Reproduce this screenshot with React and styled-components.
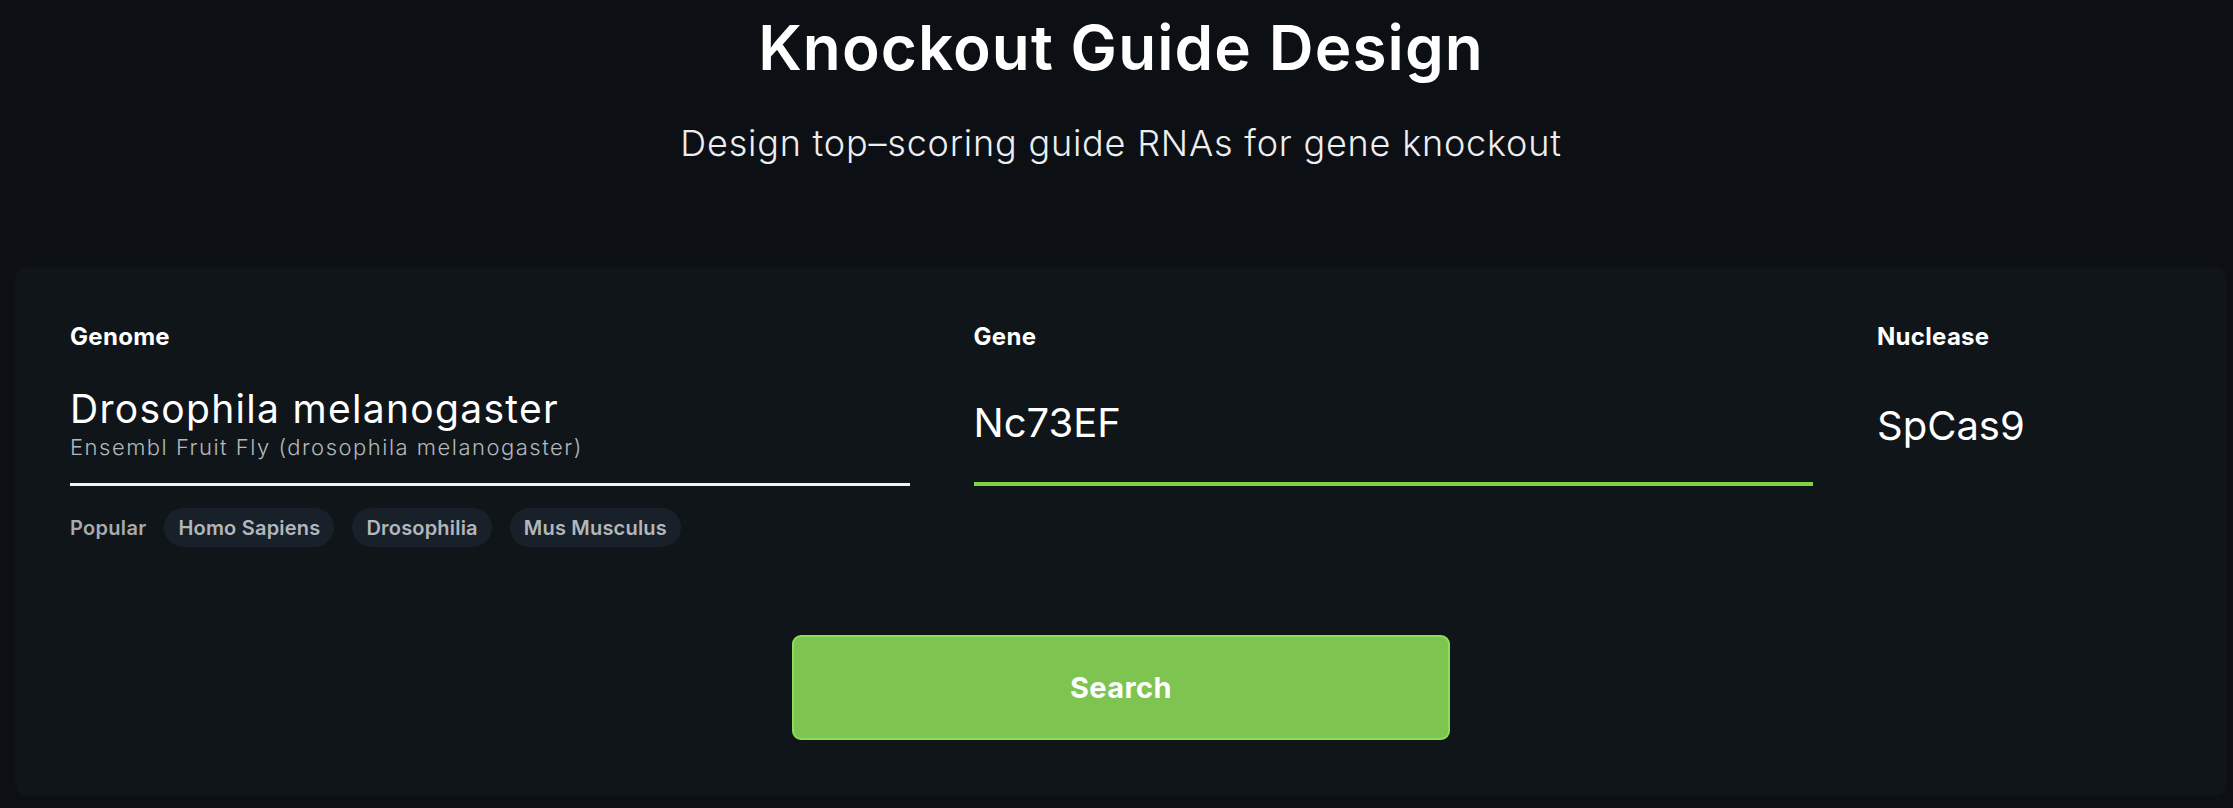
import React from "react";
import styled, { createGlobalStyle } from "styled-components";

const Global = createGlobalStyle`
  html, body { margin: 0; padding: 0; background: #0c1014; }
  body { font-family: Inter, "Noto Sans", sans-serif; color: #fff; -webkit-font-smoothing: antialiased; }
  * { box-sizing: border-box; }
`;

const Page = styled.div`
  width: 2233px;
  height: 808px;
  padding: 0 7px 0 16px;
  background: #0c1014;
  overflow: hidden;
`;

const Header = styled.header`
  display: flex;
  flex-direction: column;
  align-items: center;
  padding-top: 12px;
`;

const Title = styled.h1`
  margin: 0;
  font-size: 62px;
  line-height: 72px;
  font-weight: 600;
  letter-spacing: 1.1px;
  color: #ffffff;
`;

const Subtitle = styled.p`
  margin: 37px 0 0;
  font-size: 36px;
  line-height: 44px;
  font-weight: 300;
  letter-spacing: 0.8px;
  color: #eceef0;
`;

const Panel = styled.section`
  margin-top: 103px;
  background: #0f1519;
  border-radius: 10px;
  padding: 54px 54px 55px;
  box-shadow: 0 0 0 1px rgba(255, 255, 255, 0.015);
`;

const Fields = styled.div`
  display: grid;
  grid-template-columns: 1fr 1fr 295px;
  column-gap: 64px;
`;

const Field = styled.div`
  display: flex;
  flex-direction: column;
`;

const Label = styled.div`
  font-size: 24px;
  line-height: 29px;
  font-weight: 700;
  letter-spacing: 0.3px;
  color: #ffffff;
`;

const InputBox = styled.div`
  margin-top: 12px;
  height: 123px;
  display: flex;
  flex-direction: column;
  justify-content: center;
  padding-top: ${(p) => (p.$offset ? "6px" : "0")};
  border-bottom: ${(p) =>
    p.$line === "green" ? "4px solid #7fd24a" : p.$line === "white" ? "3px solid #f2f2f2" : "3px solid transparent"};
`;

const Value = styled.div`
  font-size: ${(p) => p.$size || 40}px;
  line-height: 1.2;
  font-weight: 400;
  letter-spacing: ${(p) => p.$ls || 0}px;
  color: #ffffff;
`;

const SubValue = styled.div`
  margin-top: 2px;
  font-size: 22px;
  line-height: 25px;
  font-weight: 300;
  letter-spacing: 1.5px;
  color: #b4b8bc;
`;

const Popular = styled.div`
  margin-top: 22px;
  display: flex;
  align-items: center;
  gap: 18px;
`;

const PopularLabel = styled.span`
  font-size: 20px;
  font-weight: 600;
  letter-spacing: 0.3px;
  color: #a7abaf;
`;

const Chip = styled.button`
  height: 39px;
  padding: 0 14px;
  border: none;
  border-radius: 20px;
  background: #18212a;
  color: #b3b7bb;
  font-family: inherit;
  font-size: 20px;
  font-weight: 600;
  letter-spacing: 0.2px;
  cursor: pointer;
`;

const Actions = styled.div`
  display: flex;
  justify-content: center;
  margin-top: 88px;
`;

const SearchButton = styled.button`
  width: 658px;
  height: 105px;
  border: 2px solid #8fdc5c;
  border-radius: 9px;
  background: #7dc450;
  color: #ffffff;
  font-family: inherit;
  font-size: 29px;
  font-weight: 700;
  letter-spacing: 0.4px;
  cursor: pointer;
`;

export default function App() {
  return (
    <>
      <Global />
      <Page>
        <Header>
          <Title>Knockout Guide Design</Title>
          <Subtitle>Design top–scoring guide RNAs for gene knockout</Subtitle>
        </Header>
        <Panel>
          <Fields>
            <Field>
              <Label>Genome</Label>
              <InputBox $line="white">
                <Value $size={39} $ls={1.3}>Drosophila melanogaster</Value>
                <SubValue>Ensembl Fruit Fly (drosophila melanogaster)</SubValue>
              </InputBox>
              <Popular>
                <PopularLabel>Popular</PopularLabel>
                <Chip>Homo Sapiens</Chip>
                <Chip>Drosophilia</Chip>
                <Chip>Mus Musculus</Chip>
              </Popular>
            </Field>
            <Field>
              <Label>Gene</Label>
              <InputBox $line="green">
                <Value>Nc73EF</Value>
              </InputBox>
            </Field>
            <Field>
              <Label>Nuclease</Label>
              <InputBox $offset>
                <Value>SpCas9</Value>
              </InputBox>
            </Field>
          </Fields>
          <Actions>
            <SearchButton>Search</SearchButton>
          </Actions>
        </Panel>
      </Page>
    </>
  );
}
